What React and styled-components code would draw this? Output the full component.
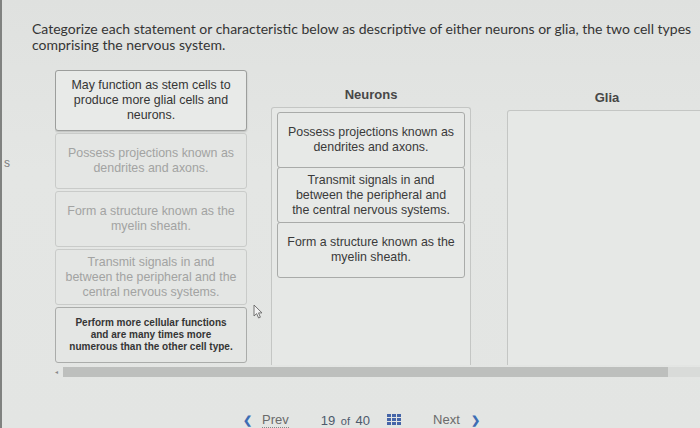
import React from "react"
import styled, { createGlobalStyle } from "styled-components"

const GlobalStyle = createGlobalStyle`
  html, body {
    margin: 0;
    padding: 0;
    background: #e2e4e2;
  }
  body {
    font-family: "Liberation Sans", Arial, sans-serif;
  }
`;

const bank = [
  { text: "May function as stem cells to produce more glial cells and neurons.", tone: "lifted" },
  { text: "Possess projections known as dendrites and axons.", tone: "faded" },
  { text: "Form a structure known as the myelin sheath.", tone: "faded" },
  { text: "Transmit signals in and between the peripheral and the central nervous systems.", tone: "faded" },
  { text: "Perform more cellular functions and are many times more numerous than the other cell type.", tone: "bold" },
  { text: "", tone: "faded" },
];

const neurons = [
  "Possess projections known as dendrites and axons.",
  "Transmit signals in and between the peripheral and the central nervous systems.",
  "Form a structure known as the myelin sheath.",
];

export default function App() {
  return (
    <>
      <GlobalStyle />
      <Page>
        <Sidebar>
          <span>s</span>
        </Sidebar>
        <Main>
          <Prompt>
            Categorize each statement or characteristic below as descriptive of either neurons or glia, the two cell types
            comprising the nervous system.
          </Prompt>

          <BoardFrame>
            <Board>
              <Bank>
                {bank.map((item, i) => (
                  <Card key={i} $tone={item.tone}>{item.text}</Card>
                ))}
              </Bank>

              <Bucket>
                <BucketTitle>Neurons</BucketTitle>
                <DropZone>
                  {neurons.map((t, i) => (
                    <Placed key={i}>{t}</Placed>
                  ))}
                </DropZone>
              </Bucket>

              <Bucket $shift={12}>
                <BucketTitle $drop={3}>Glia</BucketTitle>
                <DropZone />
              </Bucket>
            </Board>
          </BoardFrame>

          <ScrollBar>
            <ScrollArrow>&#9666;</ScrollArrow>
            <Thumb />
            <Track />
          </ScrollBar>

          <Pager>
            <Chevron>&#10094;</Chevron>
            <PagerLink>Prev</PagerLink>
            <Count>
              19 <small>of</small> 40
            </Count>
            <GridIcon viewBox="0 0 15 12">
              {[0, 1, 2].map((r) =>
                [0, 1, 2].map((c) => (
                  <rect key={`${r}${c}`} x={c * 5} y={r * 4} width="4" height="3" fill="#4565a8" />
                ))
              )}
            </GridIcon>
            <PagerLink $plain>Next</PagerLink>
            <Chevron $after>&#10095;</Chevron>
          </Pager>
        </Main>

        <Cursor viewBox="0 0 10 15">
          <path d="M1 1 L1 12 L3.6 9.6 L5.6 14 L7.4 13.2 L5.5 8.9 L9 8.9 Z" fill="#f2f2f2" stroke="#666" strokeWidth="0.9" />
        </Cursor>
      </Page>
    </>
  );
}

const Page = styled.div`
  position: relative;
  display: flex;
  width: 700px;
  height: 428px;
  overflow: hidden;
  background: linear-gradient(180deg, #dfe1df 0%, #e4e6e4 40%, #e3e5e3 100%);
`;

const Sidebar = styled.div`
  width: 8px;
  flex: none;
  display: flex;
  justify-content: flex-end;
  align-items: flex-start;
  padding-top: 156px;
  border-left: 2px solid #808280;
  span {
    font-size: 12px;
    line-height: 14px;
    color: #7c7c7c;
  }
`;

const Main = styled.div`
  flex: 1;
  display: flex;
  flex-direction: column;
  padding: 21px 0 0 22px;
  min-width: 0;
`;

const Prompt = styled.p`
  margin: 0;
  width: 680px;
  font-family: Lato, "Open Sans", sans-serif;
  font-size: 14px;
  line-height: 15.5px;
  color: #353535;
`;

const BoardFrame = styled.div`
  margin: 18px 0 0 23px;
  height: 300px;
  overflow: hidden;
`;

const Board = styled.div`
  display: flex;
  gap: 24px;
  align-items: stretch;
  height: 100%;
  width: 700px;
`;

const Bank = styled.div`
  width: 192px;
  flex: none;
  display: flex;
  flex-direction: column;
  gap: 2px;
`;

const Card = styled.div`
  box-sizing: border-box;
  flex: none;
  height: ${(p) => (p.$tone === "lifted" ? "61px" : "56px")};
  display: flex;
  align-items: center;
  justify-content: center;
  padding: 0 ${(p) => (p.$tone === "bold" ? "11px" : "9px")};
  text-align: center;
  font-size: ${(p) => (p.$tone === "bold" ? "10px" : "12.4px")};
  font-weight: ${(p) => (p.$tone === "bold" ? 700 : 400)};
  line-height: ${(p) => (p.$tone === "bold" ? "12px" : "15px")};
  color: ${(p) => (p.$tone === "faded" ? "#a2a3a2" : "#353535")};
  background: ${(p) => (p.$tone === "lifted" ? "#e8eae8" : "#e4e6e4")};
  border: 1px solid ${(p) => (p.$tone === "lifted" ? "#9c9e9c" : p.$tone === "bold" ? "#aaacaa" : "#c9cbc9")};
  border-radius: 3px;
  box-shadow: ${(p) => (p.$tone === "lifted" ? "0 1px 2px rgba(0,0,0,0.18)" : "none")};
`;

const Bucket = styled.div`
  width: 200px;
  flex: none;
  display: flex;
  flex-direction: column;
  margin-left: ${(p) => p.$shift || 0}px;
`;

const BucketTitle = styled.div`
  height: ${(p) => 37 + (p.$drop || 0)}px;
  box-sizing: border-box;
  padding-top: ${(p) => 17 + (p.$drop || 0)}px;
  text-align: center;
  font-size: 13px;
  font-weight: 700;
  color: #474747;
  line-height: 16px;
`;

const DropZone = styled.div`
  flex: 1;
  display: flex;
  flex-direction: column;
  padding: 4px 5px;
  border: 1px solid #c4c6c4;
  border-bottom: none;
  border-radius: 3px 3px 0 0;
  background: #e6e8e6;
`;

const Placed = styled.div`
  box-sizing: border-box;
  height: 56px;
  display: flex;
  align-items: center;
  justify-content: center;
  padding: 0 8px;
  text-align: center;
  font-size: 12.4px;
  line-height: 15px;
  color: #3a3a3a;
  background: #e7e9e7;
  border: 1px solid #a9aba9;
  border-radius: 3px;
  & + & {
    margin-top: -1px;
  }
`;

const ScrollBar = styled.div`
  display: flex;
  align-items: stretch;
  height: 10px;
  margin-left: 23px;
  margin-top: 2px;
`;

const ScrollArrow = styled.div`
  width: 8px;
  font-size: 6px;
  line-height: 10px;
  color: #8a8a8a;
`;

const Thumb = styled.div`
  width: 605px;
  background: #bdbfbd;
`;

const Track = styled.div`
  flex: 1;
  background: #d9dbd9;
`;

const Pager = styled.div`
  display: flex;
  align-items: center;
  margin: 35px 0 0 211px;
  font-size: 13px;
  color: #6a6a6a;
  height: 16px;
`;

const Chevron = styled.span`
  color: #3d6db4;
  font-size: 11px;
  font-weight: 700;
  margin: ${(p) => (p.$after ? "0 0 0 11px" : "0 10px 0 0")};
`;

const PagerLink = styled.span`
  border-bottom: ${(p) => (p.$plain ? "none" : "1px dotted #888")};
  line-height: 14px;
  margin-right: ${(p) => (p.$plain ? "0" : "32px")};
`;

const Count = styled.span`
  color: #4d5a6c;
  small {
    font-size: 11px;
    margin: 0 2px;
  }
`;

const GridIcon = styled.svg`
  width: 15px;
  height: 12px;
  margin: 0 31px 0 17px;
`;

const Cursor = styled.svg`
  position: absolute;
  left: 253px;
  top: 304px;
  width: 10px;
  height: 15px;
`;
